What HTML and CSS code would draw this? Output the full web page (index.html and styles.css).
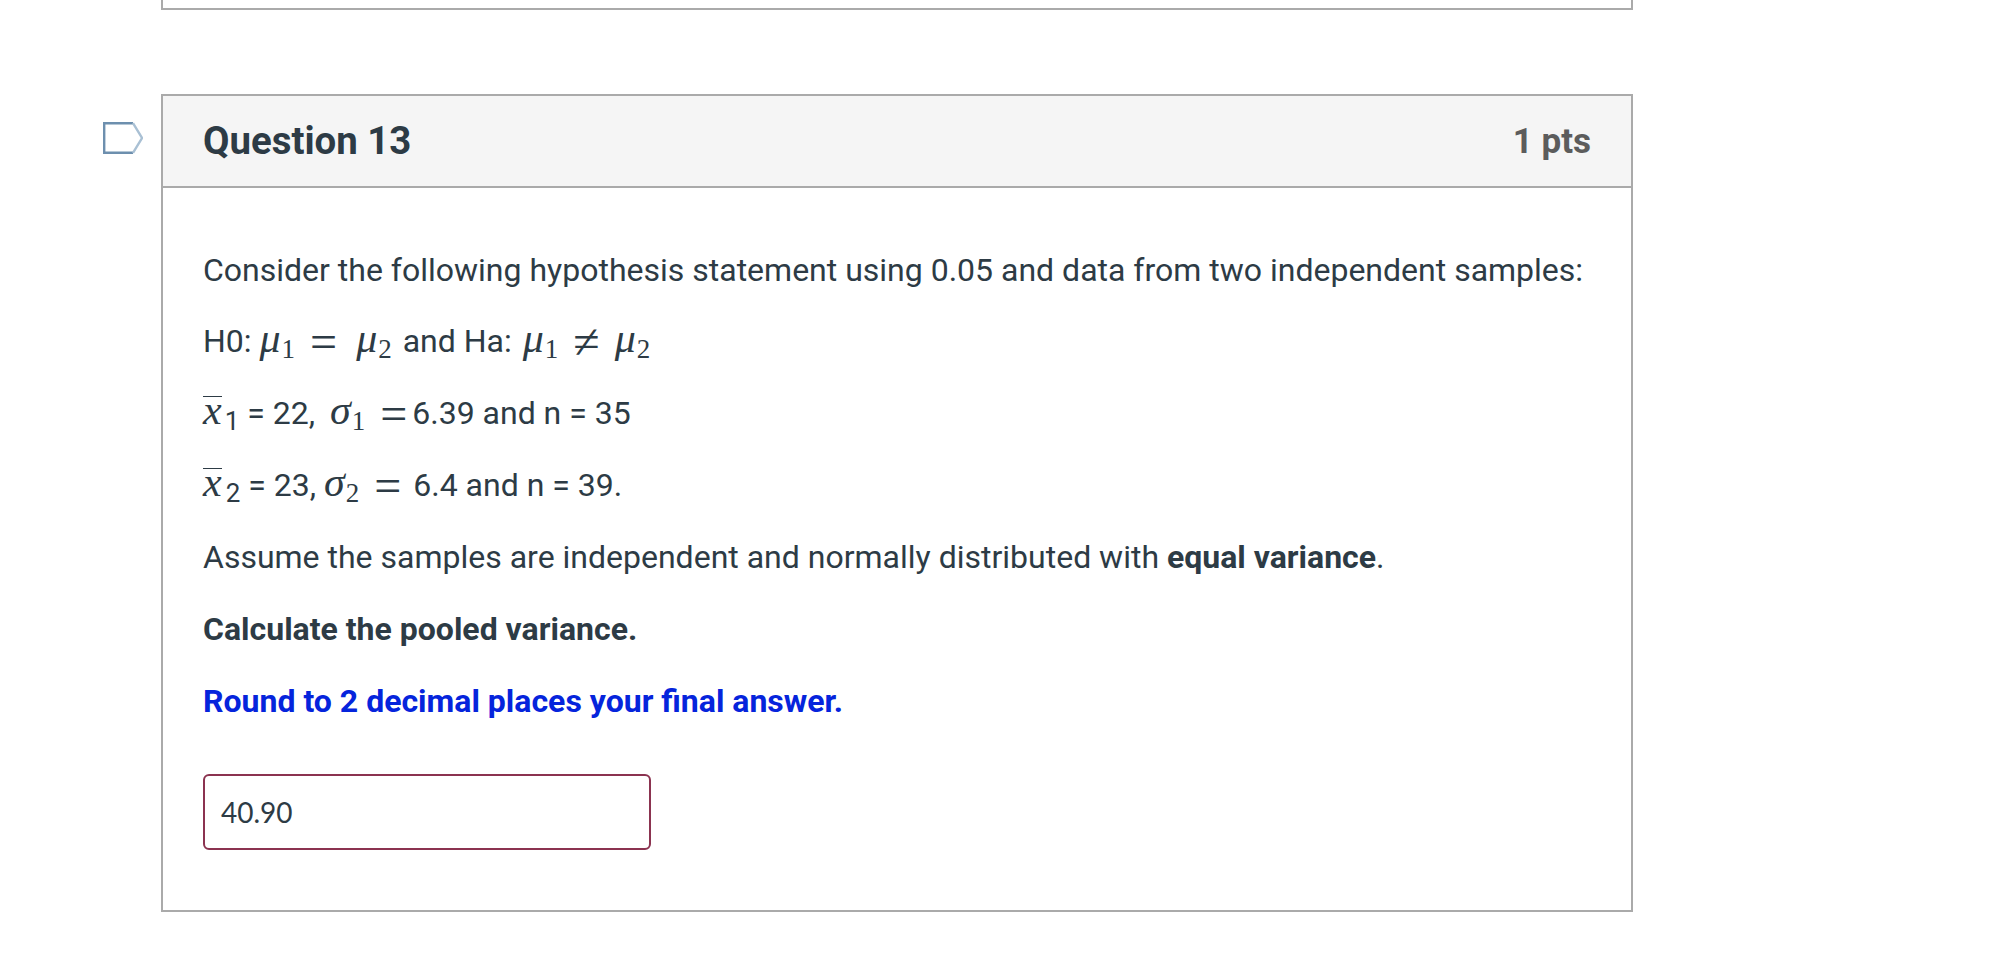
FILE: index.html
```html
<!DOCTYPE html>
<html lang="en">
<head>
<meta charset="utf-8">
<title>Question 13</title>
<link rel="stylesheet" href="styles.css">
</head>
<body>
<div class="page">
  <div class="prev-card"></div>
  <div class="question-row">
    <svg class="flag" width="40" height="32" viewBox="0 0 40 32" aria-hidden="true">
      <path class="flag-a" d="M30 1.2H1.2V30.8H30"/>
      <path class="flag-b" d="M30 1.2L39 16L30 30.8"/>
    </svg>
    <section class="card">
      <header class="card-head">
        <h2 class="title">Question 13</h2>
        <div class="pts">1 pts</div>
      </header>
      <div class="card-body">
        <p>Consider the following hypothesis statement using 0.05 and data from two independent samples:</p>
        <p>H0: <span class="m">μ<sub>1</sub></span><span class="rel eq-wide">=</span><span class="m after">μ<sub>2</sub></span> and Ha: <span class="m before">μ<sub>1</sub></span><span class="rel ne">≠</span><span class="m">μ<sub>2</sub></span></p>
        <p><span class="m bar">x</span><sub class="rs">1</sub> = 22, <span class="m sig">σ<sub>1</sub></span><span class="rel tight">=</span>6.39 and n = 35</p>
        <p><span class="m bar">x</span><sub class="rs rs-two">2</sub> = 23, <span class="m">σ<sub>2</sub></span><span class="rel eq-close">=</span>6.4 and n = 39.</p>
        <p>Assume the samples are independent and normally distributed with <strong>equal variance</strong>.</p>
        <p><strong>Calculate the pooled variance.</strong></p>
        <p><strong class="blue">Round to 2 decimal places your final answer.</strong></p>
        <div class="answer">40.90</div>
      </div>
    </section>
  </div>
</div>
</body>
</html>
```
FILE: styles.css
```css
html, body { margin: 0; padding: 0; background: #fff; }
body { font-family: Roboto, "Liberation Sans", sans-serif; color: #2d3b45; overflow: hidden; height: 961px; }
.page { padding-left: 103px; width: 1530px; }
.prev-card { margin-left: 58px; height: 8px; border: 2px solid #aaa; border-top: 0; }
.question-row { display: flex; margin-top: 84px; align-items: flex-start; gap: 18px; }
.flag { flex: none; margin-top: 28px; fill: none; stroke-width: 2.4; }
.flag-a { stroke: #6d8fae; }
.flag-b { stroke: #a9c0d4; }
.card { flex: 1; border: 2px solid #aaa; min-width: 0; }
.card-head { display: flex; justify-content: space-between; align-items: center; height: 90px; padding: 0 40px; background: #f5f5f5; border-bottom: 2px solid #aaa; }
.title { margin: 0 0 2px; font-size: 38.4px; font-weight: 700; }
.pts { font-size: 35px; font-weight: 700; color: #5c5c5c; }
.card-body { padding: 58px 40px 60px; font-size: 32px; line-height: 48px; }
.card-body p { margin: 0 0 24px; height: 48px; white-space: nowrap; }
.card-body p:first-child { margin-bottom: 23px; }
strong { font-weight: 700; }
.blue { color: #0524dc; }
.m { font-family: "Liberation Serif", serif; font-style: italic; font-size: 42px; line-height: 0; }
.m sub, .rs { font-style: normal; line-height: 0; vertical-align: -6px; }
.m sub { font-size: 27px; margin-left: 1px; }
.rs { font-size: 26px; margin-left: 3px; }
.rs-two { margin-left: 4px; }
.after { margin-right: 3px; }
.before { margin-left: 3px; }
.rel { font-family: "Liberation Serif", serif; font-size: 48px; line-height: 0; margin: 0 15px; vertical-align: -6px; }
.eq-wide { margin-right: 19px; }
.eq-close { margin-right: 12px; }
.rel.tight { margin-right: 5px; }
.sig { margin-left: 7px; }
.bar { display: inline-block; line-height: 27px; border-top: 1px solid #2d3b45; }
.answer { width: 448px; height: 76px; box-sizing: border-box; margin-top: 49px; border: 2px solid #8b3350; border-radius: 6px; padding: 0 16px; font-family: Lato, sans-serif; font-size: 28px; line-height: 72px; }
```
